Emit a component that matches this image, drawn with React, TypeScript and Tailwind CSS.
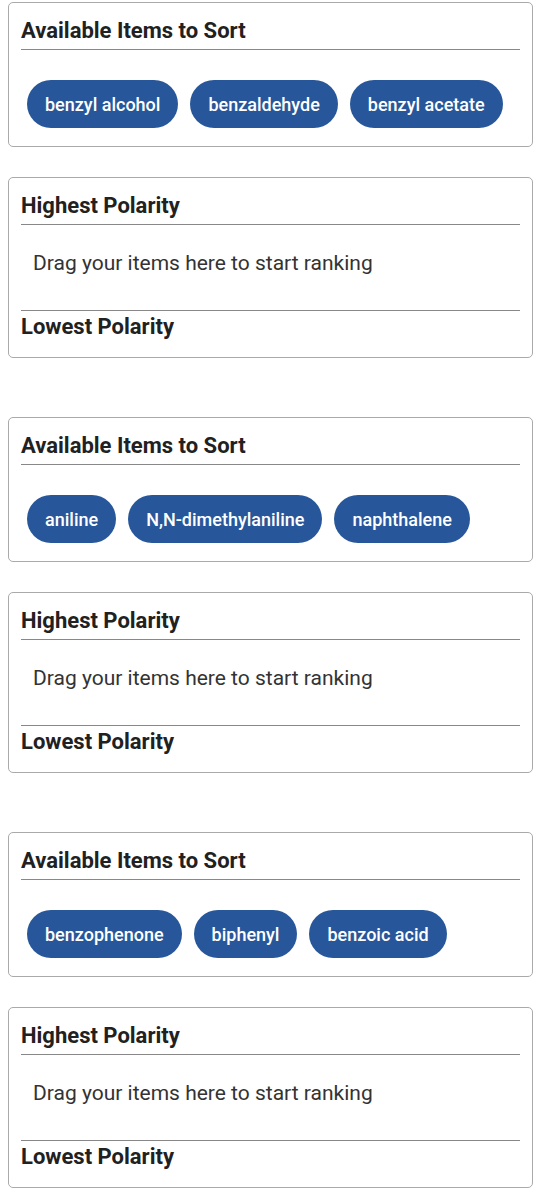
const sets = [
  ["benzyl alcohol", "benzaldehyde", "benzyl acetate"],
  ["aniline", "N,N-dimethylaniline", "naphthalene"],
  ["benzophenone", "biphenyl", "benzoic acid"],
];

const Heading = ({ children, bottom }: { children: string; bottom?: boolean }) => (
  <h2
    className={`text-[22px] leading-[30px] font-bold text-[#212121] ${
      bottom ? "border-t border-[#888] pt-[1px]" : "border-b border-[#888] pb-[3px]"
    }`}
  >
    {children}
  </h2>
);

export default function App() {
  return (
    <div className="bg-white pl-[8px] pt-[2px] font-['Roboto',sans-serif]">
      {sets.map((items, i) => (
        <div key={i} className="mb-[59px] flex w-[525px] flex-col gap-[30px]">
          {/* pool */}
          <div className="rounded-[5px] border border-[#aaa] px-[12px] pt-[13px] pb-[12px]">
            <Heading>Available Items to Sort</Heading>
            <div className="mt-[24px] flex flex-wrap">
              {items.map((item) => (
                <span
                  key={item}
                  className="m-[6px] flex h-[48px] items-center rounded-full bg-[#27579a] px-[18px] text-[18px] font-medium text-white"
                >
                  {item}
                </span>
              ))}
            </div>
          </div>
          {/* ranking zone */}
          <div className="rounded-[5px] border border-[#aaa] px-[12px] pt-[13px] pb-[15px]">
            <Heading>Highest Polarity</Heading>
            <div className="h-[85px] px-[12px] pt-[24px] text-[21px] leading-[28px] text-[#333]">
              Drag your items here to start ranking
            </div>
            <Heading bottom>Lowest Polarity</Heading>
          </div>
        </div>
      ))}
    </div>
  );
}
